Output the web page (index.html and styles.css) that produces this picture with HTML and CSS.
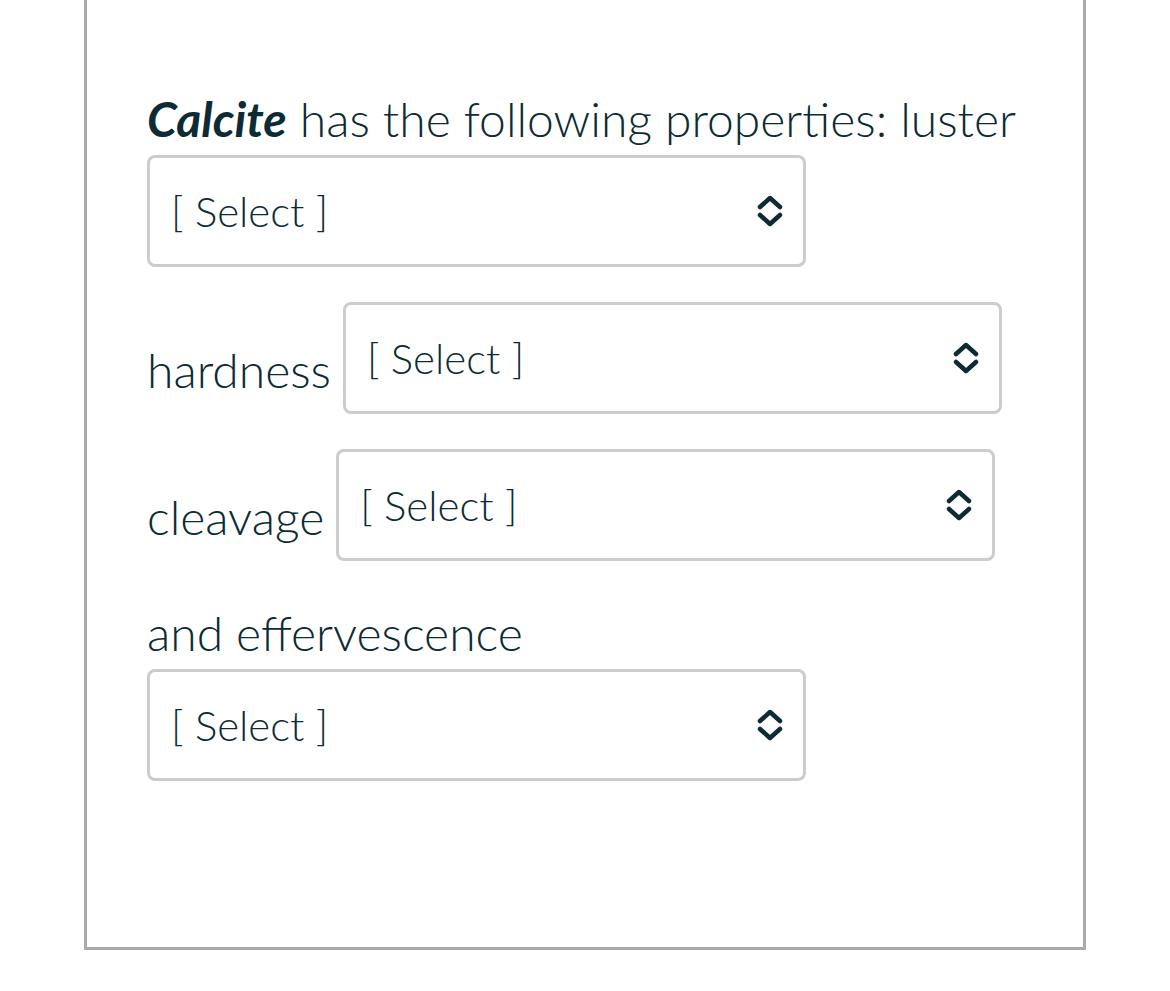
FILE: index.html
```html
<!DOCTYPE html>
<html lang="en">
<head>
    <meta charset="UTF-8">
    <meta name="viewport" content="width=device-width, initial-scale=1.0">
    <title>Quiz Question</title>
    <link rel="stylesheet" href="styles.css">
</head>
<body>
    <div class="question">
        <div class="question-text">
            <p class="intro"><strong><em>Calcite</em></strong> has the following properties: luster</p>
            <div class="row">
                <span class="dropdown">
                    <select>
                        <option>[ Select ]</option>
                        <option>metallic</option>
                        <option>non-metallic</option>
                    </select>
                    <svg class="chevron" viewBox="0 0 26 32" aria-hidden="true"><path d="M3 12 L13 3 L23 12 M3 20 L13 29 L23 20"/></svg>
                </span>
            </div>
            <div class="row gap-big">
                <span class="label">hardness</span>
                <span class="dropdown">
                    <select>
                        <option>[ Select ]</option>
                        <option>3</option>
                        <option>7</option>
                    </select>
                    <svg class="chevron" viewBox="0 0 26 32" aria-hidden="true"><path d="M3 12 L13 3 L23 12 M3 20 L13 29 L23 20"/></svg>
                </span>
            </div>
            <div class="row gap-big">
                <span class="label">cleavage</span>
                <span class="dropdown">
                    <select>
                        <option>[ Select ]</option>
                        <option>yes</option>
                        <option>no</option>
                    </select>
                    <svg class="chevron" viewBox="0 0 26 32" aria-hidden="true"><path d="M3 12 L13 3 L23 12 M3 20 L13 29 L23 20"/></svg>
                </span>
            </div>
            <p class="intro after">and effervescence</p>
            <div class="row">
                <span class="dropdown">
                    <select>
                        <option>[ Select ]</option>
                        <option>yes</option>
                        <option>no</option>
                    </select>
                    <svg class="chevron" viewBox="0 0 26 32" aria-hidden="true"><path d="M3 12 L13 3 L23 12 M3 20 L13 29 L23 20"/></svg>
                </span>
            </div>
        </div>
    </div>
</body>
</html>
```

FILE: styles.css
```css
body {
    margin: 0;
    padding: 0;
    background-color: #fff;
    font-family: Lato, "Open Sans", sans-serif;
    color: #0c2b35;
}
.question {
    width: 1002px;
    margin-left: 84px;
    border: 3px solid #aaa;
    border-top: none;
    box-sizing: border-box;
    padding: 91px 20px 166px 60px;
}
.question-text {
    font-size: 48px;
    font-weight: 300;
}
.intro {
    margin: 0;
    line-height: 55px;
}
.intro strong {
    font-weight: bold;
}
.intro.after {
    margin-top: 44px;
}
.row {
    display: flex;
    align-items: flex-end;
    margin-top: 9px;
}
.row.gap-big {
    margin-top: 35px;
}
.label {
    line-height: 55px;
    margin-right: 12px;
    margin-bottom: 17px;
}
.dropdown {
    position: relative;
    display: inline-block;
}
.dropdown select {
    appearance: none;
    -webkit-appearance: none;
    width: 659px;
    height: 112px;
    border: 3px solid #ccc;
    border-radius: 8px;
    background-color: #fff;
    padding: 0 60px 0 21px;
    font-family: inherit;
    font-size: 42px;
    font-weight: 300;
    color: #0c2b35;
    box-sizing: border-box;
}
.chevron {
    position: absolute;
    right: 23px;
    top: 40px;
    width: 26px;
    height: 32px;
    fill: none;
    stroke: #0c2b35;
    stroke-width: 4.5;
    stroke-linecap: round;
    stroke-linejoin: round;
    pointer-events: none;
}
```
